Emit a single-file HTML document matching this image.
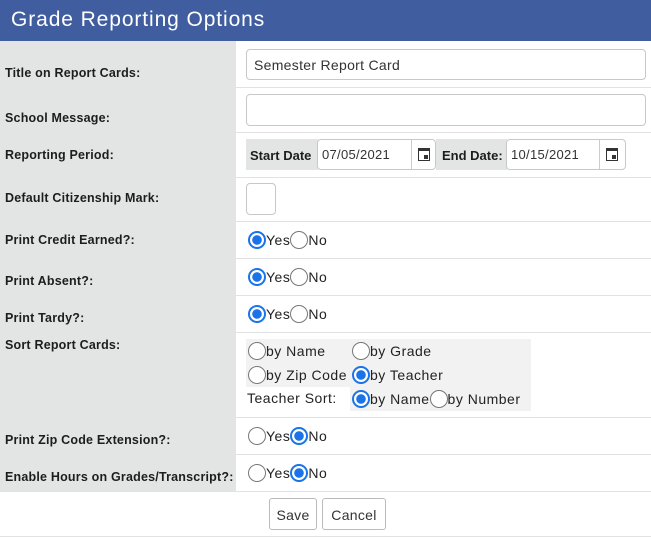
<!DOCTYPE html>
<html><head><style>
*{box-sizing:border-box;margin:0;padding:0}
body{width:651px;height:537px;background:#fff;font-family:"Liberation Sans",sans-serif;position:relative;overflow:hidden;color:#222}
.a{position:absolute}
.hdr{left:0;top:0;width:651px;height:41px;background:#3f5d9f;color:#fff;font-size:21px;padding:8px 0 0 11px;letter-spacing:0.9px}
.lcol{left:0;top:41px;width:236px;height:450px;background:#e3e5e4}
.line{height:1px;background:#e2e2e2;left:236px;width:415px}
.lab{left:5px;font-size:12.5px;font-weight:bold;color:#1d1d1d;letter-spacing:.2px}
.inp{border:1px solid #c8c8c8;border-radius:4px;background:#fff;font-size:14px;color:#333;letter-spacing:.3px}
.r{display:inline-block;width:18px;height:18px;border:1px solid #777;border-radius:50%;background:#fff;vertical-align:-4px}
.r.c{border:2px solid #1a73e8;background:radial-gradient(circle,#1a73e8 0 4.5px,#fff 5px)}
.t{font-size:14px;color:#222;letter-spacing:.5px;white-space:nowrap}
.btn{border:1px solid #bbb;border-radius:3px;background:#fff;font-size:14px;color:#333;text-align:center;padding-top:8px;height:32px;letter-spacing:.3px}
.cal{width:12px;height:13px;border:1.5px solid #333;border-top-width:3px;}
</style></head><body>
<div class="a hdr">Grade Reporting Options</div>
<div class="a lcol"></div>
<div class="a line" style="top:87px"></div>
<div class="a line" style="top:132px"></div>
<div class="a line" style="top:177px"></div>
<div class="a line" style="top:221px"></div>
<div class="a line" style="top:258px"></div>
<div class="a line" style="top:295px"></div>
<div class="a line" style="top:332px"></div>
<div class="a line" style="top:417px"></div>
<div class="a line" style="top:454px"></div>
<div class="a line" style="top:491px;left:0;width:651px"></div>
<div class="a line" style="top:536px;left:0;width:651px"></div>

<div class="a lab" style="top:66px">Title on Report Cards:</div>
<div class="a lab" style="top:111px">School Message:</div>
<div class="a lab" style="top:148px">Reporting Period:</div>
<div class="a lab" style="top:191px">Default Citizenship Mark:</div>
<div class="a lab" style="top:233px">Print Credit Earned?:</div>
<div class="a lab" style="top:274px">Print Absent?:</div>
<div class="a lab" style="top:311px">Print Tardy?:</div>
<div class="a lab" style="top:338px">Sort Report Cards:</div>
<div class="a lab" style="top:433px">Print Zip Code Extension?:</div>
<div class="a lab" style="top:470px">Enable Hours on Grades/Transcript?:</div>

<div class="a inp" style="left:246px;top:49px;width:400px;height:31px;padding:7px 0 0 7px">Semester Report Card</div>
<div class="a inp" style="left:246px;top:94px;width:400px;height:32px"></div>

<div class="a" style="left:246px;top:139px;width:72px;height:31px;background:#e3e5e4"></div>
<div class="a lab" style="left:250px;top:148px;font-size:13px;letter-spacing:0">Start Date</div>
<div class="a inp" style="left:317px;top:139px;width:119px;height:31px;padding:7px 0 0 4px;font-size:13px">07/05/2021</div>
<div class="a" style="left:411px;top:140px;width:1px;height:29px;background:#ccc"></div>
<div class="a cal" style="left:418px;top:148px"></div>
<div class="a" style="left:424px;top:155px;width:4px;height:4px;background:#333"></div>
<div class="a" style="left:436px;top:139px;width:71px;height:31px;background:#e3e5e4"></div>
<div class="a lab" style="left:442px;top:148px;font-size:13px;letter-spacing:0">End Date:</div>
<div class="a inp" style="left:506px;top:139px;width:120px;height:31px;padding:7px 0 0 4px;font-size:13px">10/15/2021</div>
<div class="a" style="left:599px;top:140px;width:1px;height:29px;background:#ccc"></div>
<div class="a cal" style="left:606px;top:148px"></div>
<div class="a" style="left:612px;top:155px;width:4px;height:4px;background:#333"></div>

<div class="a inp" style="left:246px;top:183px;width:30px;height:32px"></div>

<div class="a t" style="left:248px;top:231px"><span class="r c"></span>Yes<span class="r"></span>No</div>
<div class="a t" style="left:248px;top:268px"><span class="r c"></span>Yes<span class="r"></span>No</div>
<div class="a t" style="left:248px;top:305px"><span class="r c"></span>Yes<span class="r"></span>No</div>

<div class="a" style="left:246px;top:339px;width:285px;height:48px;background:#f2f2f2"></div>
<div class="a" style="left:350px;top:387px;width:181px;height:24px;background:#f2f2f2"></div>
<div class="a t" style="left:248px;top:342px"><span class="r"></span>by Name</div>
<div class="a t" style="left:352px;top:342px"><span class="r"></span>by Grade</div>
<div class="a t" style="left:248px;top:366px"><span class="r"></span>by Zip Code</div>
<div class="a t" style="left:352px;top:366px"><span class="r c"></span>by Teacher</div>
<div class="a t" style="left:247px;top:390px">Teacher Sort:</div>
<div class="a t" style="left:352px;top:390px"><span class="r c"></span>by Name<span class="r"></span>by Number</div>

<div class="a t" style="left:248px;top:427px"><span class="r"></span>Yes<span class="r c"></span>No</div>
<div class="a t" style="left:248px;top:464px"><span class="r"></span>Yes<span class="r c"></span>No</div>

<div class="a btn" style="left:269px;top:498px;width:48px">Save</div>
<div class="a btn" style="left:322px;top:498px;width:64px">Cancel</div>
</body></html>
